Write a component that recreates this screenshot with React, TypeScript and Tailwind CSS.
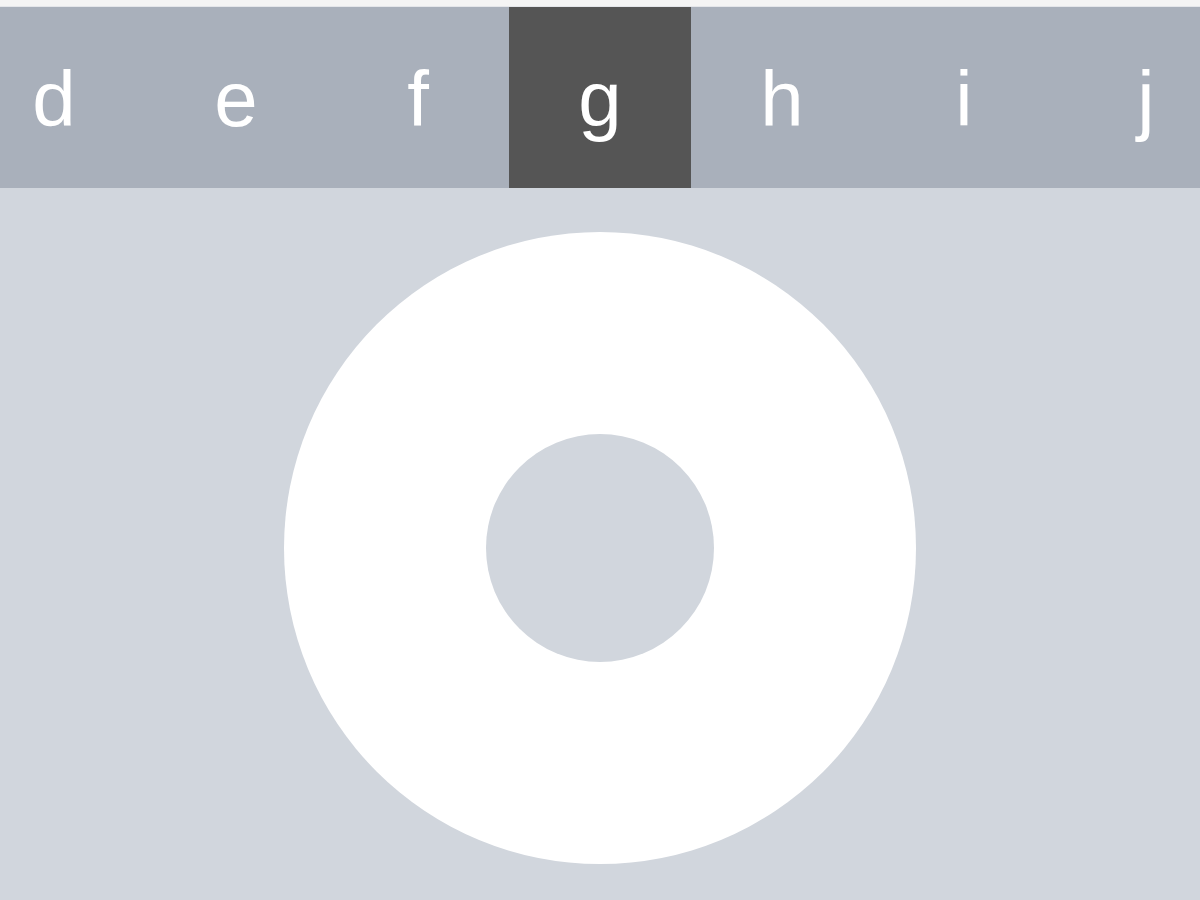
import React from "react";

const letters = ["d", "e", "f", "g", "h", "i", "j"];
const selected = "g";

export default function App() {
  return (
    <div className="w-[1200px] h-[900px] overflow-hidden bg-[#d1d6dd] font-['Liberation_Sans',Arial,sans-serif]">
      {/* top edge */}
      <div className="h-[7px] bg-[#f4f4f4] border-b border-[#e4e6ea]" />

      {/* letter picker */}
      <div className="h-[181px] bg-[#a9b0bb] flex justify-center overflow-hidden">
        {letters.map((l) => (
          <div
            key={l}
            className={
              l === selected
                ? "shrink-0 w-[182px] h-full flex items-center justify-center pt-[2px] bg-[#555555] text-white text-[78px] leading-none"
                : "shrink-0 w-[182px] h-full flex items-center justify-center pt-[2px] text-white text-[78px] leading-none"
            }
          >
            {l}
          </div>
        ))}
      </div>

      {/* wheel */}
      <div className="flex justify-center pt-[44px]">
        <div className="w-[632px] h-[632px] rounded-full bg-white flex items-center justify-center">
          <div className="w-[228px] h-[228px] rounded-full bg-[#d1d6dd]" />
        </div>
      </div>
    </div>
  );
}
